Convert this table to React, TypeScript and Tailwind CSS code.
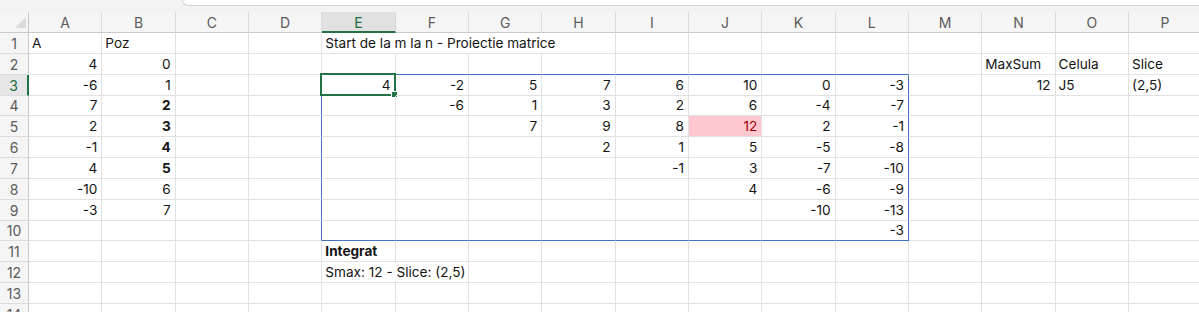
import React from "react";

type Cell = {
  v: string;
  bold?: boolean;
  left?: boolean;
  span?: number;
  bad?: boolean;
};

const COLS = ["A", "B", "C", "D", "E", "F", "G", "H", "I", "J", "K", "L", "M", "N", "O", "P"];

const num = (v: number | string, bold = false): Cell => ({ v: String(v), bold });
const txt = (v: string, extra: Partial<Cell> = {}): Cell => ({ v, left: true, ...extra });

// sheet contents, keyed by row then column letter
const SHEET: Record<number, Record<string, Cell>> = {
  1: { A: txt("A"), B: txt("Poz"), E: txt("Start de la m la n - Proiectie matrice", { span: 4 }) },
  2: { A: num(4), B: num(0), N: txt("MaxSum"), O: txt("Celula"), P: txt("Slice") },
  3: {
    A: num(-6), B: num(1),
    E: num(4), F: num(-2), G: num(5), H: num(7), I: num(6), J: num(10), K: num(0), L: num(-3),
    N: num(12), O: txt("J5"), P: txt("(2,5)"),
  },
  4: { A: num(7), B: num(2, true), F: num(-6), G: num(1), H: num(3), I: num(2), J: num(6), K: num(-4), L: num(-7) },
  5: { A: num(2), B: num(3, true), G: num(7), H: num(9), I: num(8), J: { v: "12", bad: true }, K: num(2), L: num(-1) },
  6: { A: num(-1), B: num(4, true), H: num(2), I: num(1), J: num(5), K: num(-5), L: num(-8) },
  7: { A: num(4), B: num(5, true), I: num(-1), J: num(3), K: num(-7), L: num(-10) },
  8: { A: num(-10), B: num(6), J: num(4), K: num(-6), L: num(-9) },
  9: { A: num(-3), B: num(7), K: num(-10), L: num(-13) },
  10: { L: num(-3) },
  11: { E: txt("Integrat", { bold: true }) },
  12: { E: txt("Smax: 12 - Slice: (2,5)", { span: 2 }) },
};

const ROWS = Array.from({ length: 14 }, (_, i) => i + 1);
const SHORT_ROWS = new Set([4, 10]);

// the boxed range E3:L10
const inRangeCols = (c: number) => c >= 4 && c <= 11;

function rightBorder(row: number, colEnd: number) {
  const boxed = row >= 3 && row <= 10 && (colEnd === 3 || colEnd === 11);
  return boxed ? "border-r-[#4472c4]" : "border-r-[#e1e1e1]";
}

function bottomBorder(row: number, colStart: number, colEnd: number) {
  const boxed = (row === 2 || row === 10) && colEnd <= 11 && inRangeCols(colStart);
  return boxed ? "border-b-[#4472c4]" : "border-b-[#e1e1e1]";
}

function SelectAllCorner() {
  return (
    <div className="flex items-end justify-end bg-[#f5f5f5] border-r border-b border-r-[#c8c8c8] border-b-[#c8c8c8] pr-[2px] pb-[4px]">
      <svg width="11" height="11" viewBox="0 0 11 11">
        <polygon points="11,0 11,11 0,11" fill="#dadada" />
      </svg>
    </div>
  );
}

function ColumnHeader({ name, active }: { name: string; active: boolean }) {
  return active ? (
    <div className="flex items-center justify-center bg-[#e1e1e1] border-r border-r-[#d6d6d6] border-b-2 border-b-[#217346] text-[#1e6b40] text-[14px] pt-[1px]">
      {name}
    </div>
  ) : (
    <div className="flex items-center justify-center bg-[#f5f5f5] border-r border-b border-r-[#dcdcdc] border-b-[#c8c8c8] text-[#5c5c5c] text-[14px]">
      {name}
    </div>
  );
}

function RowHeader({ n, active }: { n: number; active: boolean }) {
  return active ? (
    <div className="flex items-center justify-center bg-[#e6e6e6] border-r-2 border-b border-r-[#217346] border-b-[#dcdcdc] text-[#1e6b40] text-[14px]">
      {n}
    </div>
  ) : (
    <div className="flex items-center justify-center bg-[#f5f5f5] border-r border-b border-r-[#c8c8c8] border-b-[#dcdcdc] text-[#5c5c5c] text-[14px]">
      {n}
    </div>
  );
}

function DataCell({ row, col, cell }: { row: number; col: number; cell?: Cell }) {
  const span = cell?.span ?? 1;
  const end = col + span - 1;
  const spanCls = span === 4 ? "col-span-4" : span === 2 ? "col-span-2" : "";
  const selected = row === 3 && col === 4;
  const tone = cell?.bad ? "bg-[#ffc7ce] text-[#9c0006]" : "text-[#141414]";
  const align = cell?.left ? "justify-start pl-[3px]" : "justify-end pr-[4px]";
  return (
    <div
      className={`relative flex items-center whitespace-nowrap border-r border-b text-[13.6px] ${spanCls} ${rightBorder(row, end)} ${bottomBorder(row, col, end)} ${tone} ${align} ${cell?.bold ? "font-bold" : ""}`}
    >
      {cell?.v}
      {selected && (
        <div className="absolute -left-[2px] -top-[2px] -right-[1px] -bottom-[1px] border-2 border-[#217346]">
          <div className="absolute -right-[4px] -bottom-[4px] w-[7px] h-[7px] bg-[#217346] border border-white" />
        </div>
      )}
    </div>
  );
}

export default function App() {
  return (
    <div
      className="w-[1199px] h-[312px] overflow-hidden bg-white"
      style={{ fontFamily: "Inter, 'Liberation Sans', sans-serif" }}
    >
      {/* strip under the formula bar */}
      <div className="flex h-[12px] bg-[#f3f3f3]">
        <div className="w-[182px] shrink-0" />
        <div className="flex-1 h-[6px] bg-white border-l border-b border-[#d4d4d4] rounded-bl-[6px]" />
      </div>

      <div
        className="grid grid-cols-[29px_repeat(16,73.33px)_1fr]"
        style={{
          gridTemplateRows: ["21px", ...ROWS.map((r) => (SHORT_ROWS.has(r) ? "20px" : "21px"))].join(" "),
        }}
      >
        <SelectAllCorner />
        {COLS.map((c, i) => (
          <ColumnHeader key={c} name={c} active={i === 4} />
        ))}
        <div className="bg-[#f5f5f5] border-b border-b-[#c8c8c8]" />

        {ROWS.map((r) => {
          const cells: React.ReactNode[] = [<RowHeader key={`h${r}`} n={r} active={r === 3} />];
          const rowData = SHEET[r] ?? {};
          let c = 0;
          while (c < COLS.length) {
            const cell = rowData[COLS[c]];
            cells.push(<DataCell key={`${r}-${c}`} row={r} col={c} cell={cell} />);
            c += cell?.span ?? 1;
          }
          cells.push(<div key={`t${r}`} className="border-b border-b-[#e1e1e1]" />);
          return cells;
        })}
      </div>
    </div>
  );
}
